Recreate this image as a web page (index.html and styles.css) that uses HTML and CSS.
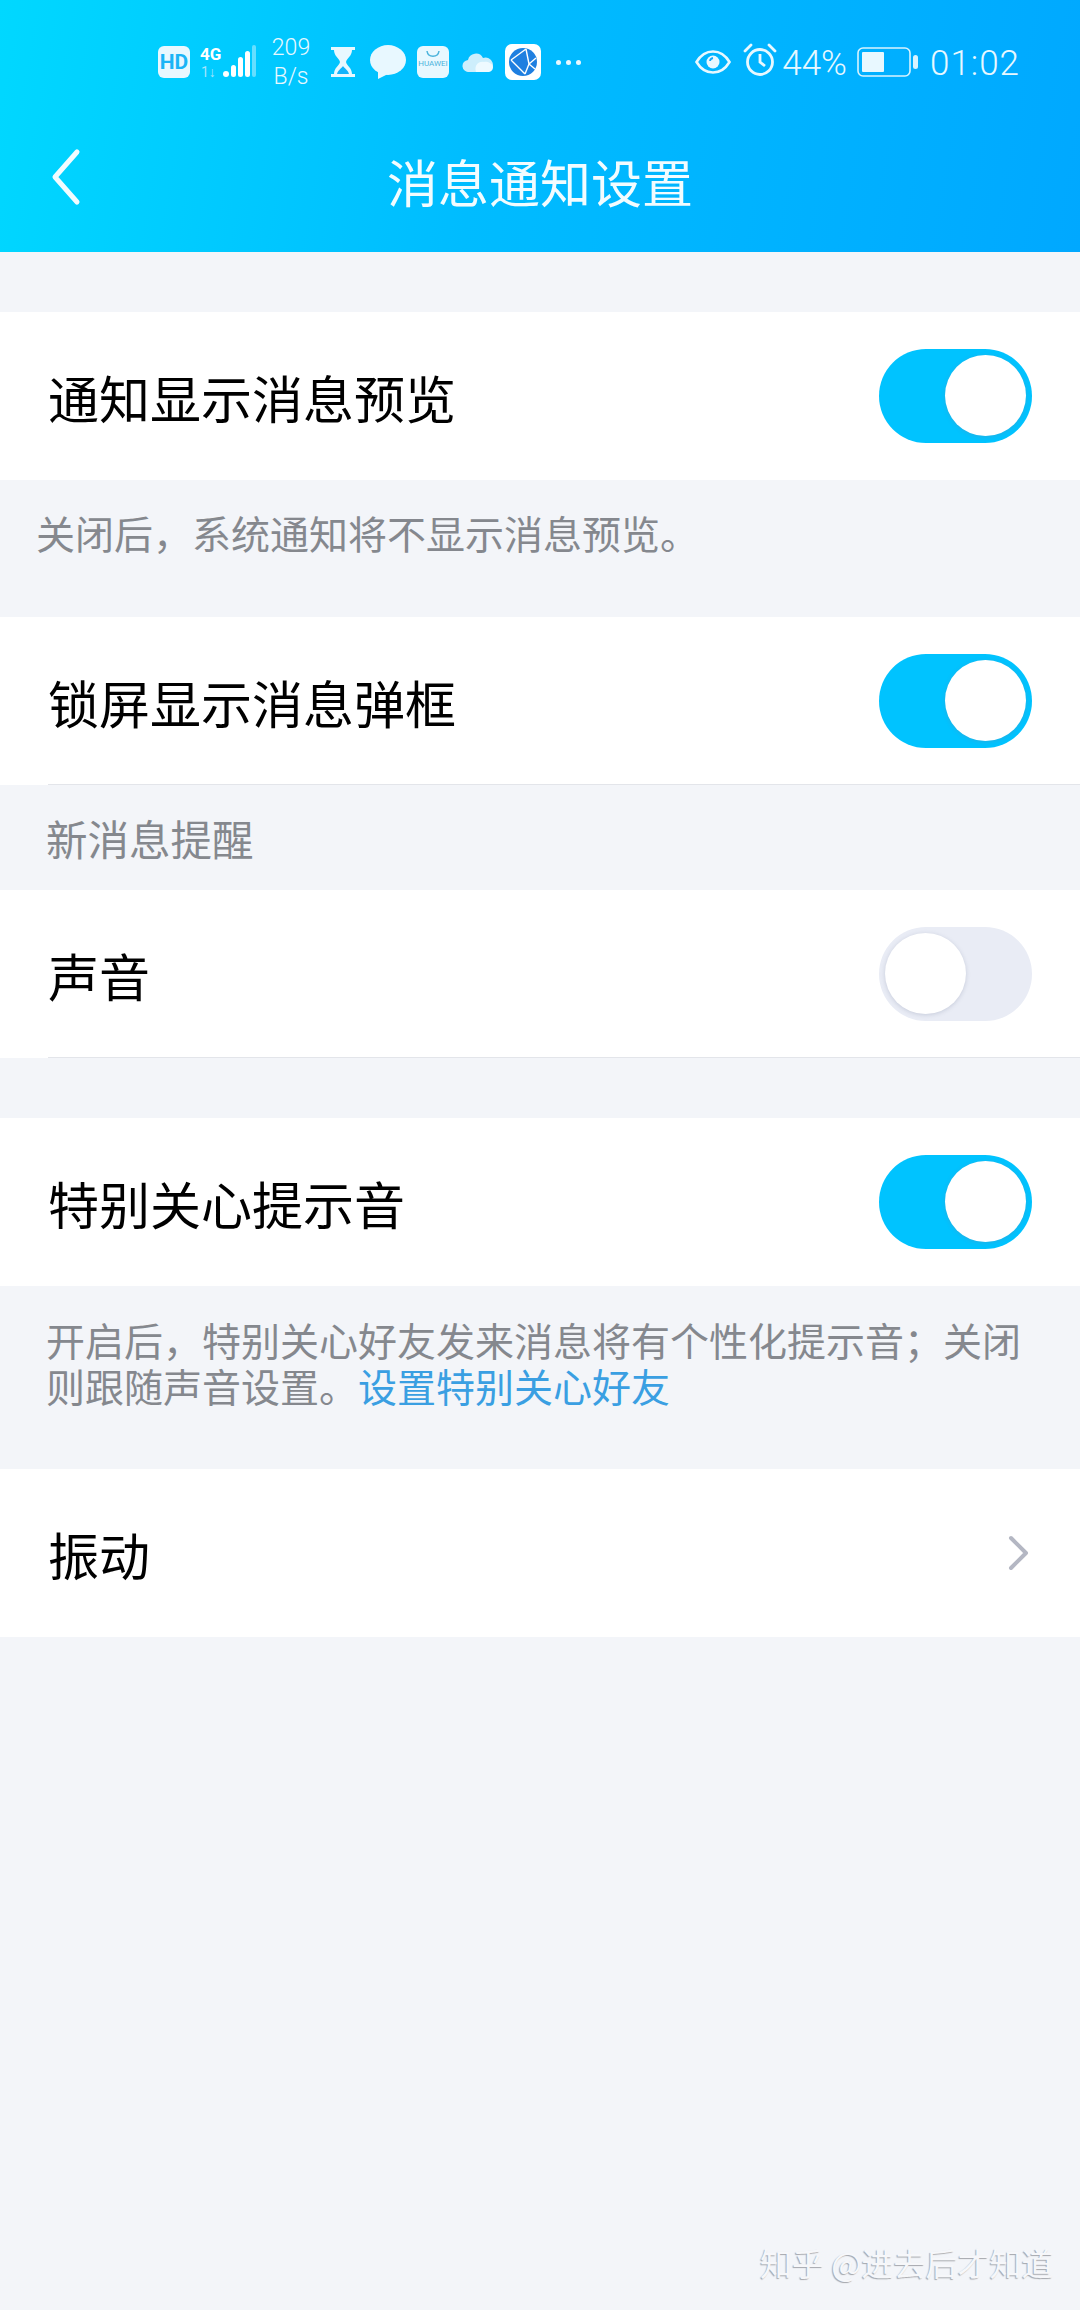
FILE: index.html
```html
<!DOCTYPE html>
<html lang="zh-CN">
<head>
  <meta charset="UTF-8">
  <meta name="viewport" content="width=device-width, initial-scale=1.0">
  <link rel="stylesheet" href="styles.css">
  <title>消息通知设置</title>
</head>
<body>
  <header class="top">
    <div class="status">
      <svg class="ico hd" viewBox="0 0 32 32"><rect width="32" height="32" rx="6" fill="#e8f8ff"/><text x="16" y="23" text-anchor="middle" class="hd-txt">HD</text></svg>
      <svg class="ico net" viewBox="0 0 56 34">
        <text x="0" y="15" class="net-txt">4G</text>
        <text x="1" y="32" class="net-sub">1↓</text>
        <circle cx="26" cy="29" r="3" fill="#fff"/>
        <rect x="31" y="20" width="5" height="12" rx="2.500" fill="#fff"/>
        <rect x="38" y="12" width="5" height="20" rx="2.500" fill="#fff"/>
        <rect x="45" y="6" width="5" height="26" rx="2.500" fill="#fff"/>
        <rect x="52" y="0" width="4" height="32" rx="2" fill="#fff" opacity=".4"/>
      </svg>
      <div class="speed"><span>209</span><span>B/s</span></div>
      <svg class="ico glass" viewBox="0 0 26 32"><path d="M1 1h24v3h-3c0 6-5 8-6 12 1 4 6 6 6 12h3v3H1v-3h3c0-6 5-8 6-12C9 12 4 10 4 4H1z" fill="#e8f8ff"/><path d="M7 28c1-4 5-6 6-8 1 2 5 4 6 8z" fill="#14b4fb"/></svg>
      <svg class="ico bubble" viewBox="0 0 36 34"><ellipse cx="18" cy="15" rx="18" ry="15" fill="#e8f8ff"/><path d="M8 24l0 10 12-6z" fill="#e8f8ff"/></svg>
      <svg class="ico shop" viewBox="0 0 32 32"><rect width="32" height="32" rx="6" fill="#e8f8ff"/><path d="M10 5c1 7 11 7 12 0" fill="none" stroke="#4cb4dc" stroke-width="1.500"/><text x="16" y="20" text-anchor="middle" class="shop-txt">HUAWEI</text></svg>
      <svg class="ico cloud" viewBox="0 0 32 20"><path d="M7 20a6 6 0 0 1-1-12 8 8 0 0 1 15-2 7 7 0 0 1 5 14z" fill="#cdeefc"/><path d="M14 20c-2-6 2-11 8-10 2-1 9 1 9 5s-3 5-5 5z" fill="#eefaff"/></svg>
      <svg class="ico app" viewBox="0 0 36 36"><rect width="36" height="36" rx="7" fill="#fff"/><circle cx="18" cy="18" r="14" fill="#1f7fe0"/><path d="M6 16l15-11M6 16l14 14M21 5l3 15-4 10M24 20l7-6M24 20l6 5" stroke="#fff" stroke-width="1.400" fill="none"/></svg>
      <div class="dots"><i></i><i></i><i></i></div>

      <div class="status-right">
        <svg class="ico eye" viewBox="0 0 36 24"><path d="M1.500 12C6 4.500 11.500 1.500 18 1.500S30 4.500 34.500 12C30 19.500 24.500 22.500 18 22.500S6 19.500 1.500 12z" fill="none" stroke="#e8f8ff" stroke-width="2.600"/><circle cx="18" cy="12" r="6.500" fill="#e8f8ff"/><path d="M15 11a3.500 3.500 0 0 1 3-3" stroke="#14a8fb" stroke-width="1.800" fill="none"/></svg>
        <svg class="ico alarm" viewBox="0 0 34 34"><circle cx="17" cy="19" r="12.500" fill="none" stroke="#e8f8ff" stroke-width="2.800"/><path d="M17 11v8l5 4" fill="none" stroke="#e8f8ff" stroke-width="2.800"/><path d="M2 8l6-6M32 8l-6-6" stroke="#e8f8ff" stroke-width="2.800" stroke-linecap="round"/></svg>
        <span class="pct">44%</span>
        <svg class="ico batt" viewBox="0 0 62 30"><rect x="1" y="1" width="52" height="28" rx="5" fill="none" stroke="#d8f3ff" stroke-width="1.600"/><rect x="5" y="5" width="22" height="20" rx="1" fill="#e8f8ff"/><rect x="56" y="8" width="5" height="14" rx="2.500" fill="#d8f3ff"/></svg>
        <span class="clock">01:02</span>
      </div>
    </div>
    <div class="nav">
      <svg class="back" viewBox="0 0 30 58"><path d="M26 4L4 29l22 25" fill="none" stroke="#f2fcff" stroke-width="5" stroke-linecap="round" stroke-linejoin="round"/></svg>
      <h1>消息通知设置</h1>
    </div>
  </header>

  <main>
    <div class="gap"></div>
    <section class="row">
      <span class="label">通知显示消息预览</span>
      <div class="switch on"><div class="knob"></div></div>
    </section>
    <p class="hint hint-first">关闭后，系统通知将不显示消息预览。</p>

    <section class="row line">
      <span class="label">锁屏显示消息弹框</span>
      <div class="switch on"><div class="knob"></div></div>
    </section>
    <p class="group">新消息提醒</p>

    <section class="row line">
      <span class="label">声音</span>
      <div class="switch"><div class="knob"></div></div>
    </section>
    <div class="gap"></div>

    <section class="row">
      <span class="label">特别关心提示音</span>
      <div class="switch on"><div class="knob"></div></div>
    </section>
    <p class="hint hint-long">开启后，特别关心好友发来消息将有个性化提示音；关闭则跟随声音设置。<a class="link">设置特别关心好友</a></p>

    <section class="row">
      <span class="label">振动</span>
      <svg class="arrow" viewBox="0 0 22 36"><path d="M3 3l15 15L3 33" fill="none" stroke="#b4b7c3" stroke-width="4" stroke-linecap="round" stroke-linejoin="round"/></svg>
    </section>
  </main>

  <div class="mark">知乎 @进去后才知道</div>
</body>
</html>
```

FILE: styles.css
```css
* {
  box-sizing: border-box;
}

html,
body {
  margin: 0;
  padding: 0;
}

body {
  position: relative;
  width: 1080px;
  height: 2310px;
  overflow: hidden;
  background-color: #f3f5f9;
  font-family: "Noto Sans CJK SC", "Noto Sans", sans-serif;
}

.top {
  height: 252px;
  background: linear-gradient(100deg, #00d8ff 0%, #00bcff 45%, #00a8ff 100%);
  color: #fff;
}

.status {
  display: flex;
  align-items: center;
  height: 64px;
  padding: 30px 60px 0 158px;
  box-sizing: content-box;
  color: #e8f8ff;
}

.ico {
  display: block;
  flex: none;
}

.hd { width: 32px; height: 32px; }
.net { width: 56px; height: 34px; margin-left: 10px; }
.glass { width: 26px; height: 32px; margin-left: 18px; }
.bubble { width: 36px; height: 34px; margin-left: 14px; }
.shop { width: 32px; height: 32px; margin-left: 11px; }
.cloud { width: 32px; height: 20px; margin-left: 13px; }
.app { width: 36px; height: 36px; margin-left: 11px; }

.hd-txt {
  font: bold 21px "Roboto", sans-serif;
  fill: #1bb4f6;
}

.net-txt {
  font: bold 17px "Roboto", sans-serif;
  fill: #fff;
}

.net-sub {
  font: 14px "Roboto", sans-serif;
  fill: #a5e4fd;
}

.shop-txt {
  font: 8px "Roboto", sans-serif;
  fill: #4cb4dc;
}

.speed {
  display: flex;
  flex-direction: column;
  align-items: center;
  width: 42px;
  margin-left: 14px;
  font: 23px/29px "Roboto", sans-serif;
  font-weight: 300;
}

.dots {
  display: flex;
  gap: 5px;
  margin-left: 15px;
}

.dots i {
  width: 5px;
  height: 5px;
  border-radius: 50%;
  background-color: #e8f8ff;
}

.status-right {
  display: flex;
  align-items: center;
  margin-left: auto;
}

.eye { width: 36px; height: 24px; }
.alarm { width: 34px; height: 34px; margin-left: 12px; margin-top: -4px; }
.batt { width: 62px; height: 30px; margin-left: 10px; }

.pct {
  margin-top: 2px;
  margin-left: 5px;
  font: 35px "Roboto", sans-serif;
  font-weight: 300;
}

.clock {
  margin-top: 2px;
  margin-left: 11px;
  font: 35px "Roboto", sans-serif;
  font-weight: 300;
  letter-spacing: 1px;
}

.nav {
  position: relative;
  display: flex;
  justify-content: center;
  align-items: center;
  height: 92px;
  margin-top: 41px;
}

.nav h1 {
  margin: 0;
  font-size: 51px;
  font-weight: 400;
  line-height: 72px;
  color: #f2fcff;
}

.back {
  position: absolute;
  left: 51px;
  top: 13px;
  width: 30px;
  height: 58px;
}

.gap {
  height: 60px;
}

.row {
  display: flex;
  justify-content: space-between;
  align-items: center;
  height: 168px;
  padding: 0 48px;
  background-color: #fff;
}

.row.line {
  position: relative;
}

.row.line::after {
  content: "";
  position: absolute;
  left: 48px;
  right: 0;
  bottom: 0;
  height: 1px;
  background-color: #e3e5ea;
}

.label {
  padding-top: 2px;
  font-size: 51px;
  line-height: 70px;
  color: #000;
}

.switch {
  position: relative;
  width: 153px;
  height: 94px;
  border-radius: 47px;
  background-color: #e9ecf5;
}

.switch.on {
  background-color: #00c3ff;
}

.knob {
  position: absolute;
  left: 6px;
  top: 6px;
  width: 81px;
  height: 81px;
  border-radius: 50%;
  background-color: #fff;
  box-shadow: 0 1px 4px rgba(120, 130, 160, .3);
}

.switch.on .knob {
  left: 66px;
  top: 6px;
}

.arrow {
  width: 22px;
  height: 36px;
  margin-right: 2px;
}

.hint {
  margin: 0;
  font-size: 39px;
  line-height: 46px;
  color: #85888e;
}

.hint-first {
  height: 137px;
  padding: 29px 36px 0;
}

.hint-long {
  height: 183px;
  padding: 30px 46px 0;
}

.link {
  color: #3a9fe2;
}

.group {
  display: flex;
  align-items: center;
  height: 105px;
  margin: 0;
  padding: 0 46px;
  font-size: 41.500px;
  color: #85888e;
}

.mark {
  position: absolute;
  left: 760px;
  top: 2239px;
  font-size: 32px;
  line-height: 46px;
  color: #f6f7fa;
  text-shadow: -1px 1px 1px #a5a7ac;
}
```
